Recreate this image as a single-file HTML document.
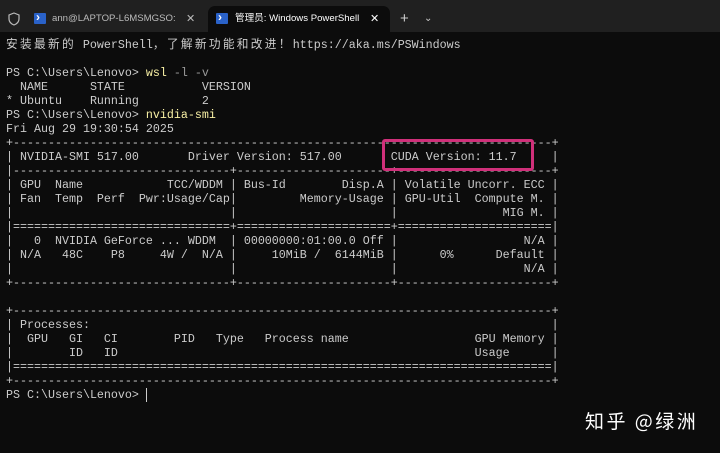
<!DOCTYPE html>
<html><head><meta charset="utf-8"><style>
body{margin:0;width:720px;height:453px;background:#0c0c0c;overflow:hidden;position:relative;font-family:"Liberation Sans","Noto Sans CJK SC",sans-serif}
.bar{position:absolute;left:0;top:0;width:720px;height:32px;background:#202020}
.tab{position:absolute;top:6px;height:26px;font-size:9.6px;color:#bbb;line-height:26px;white-space:nowrap}
.act{background:#0c0c0c;border-radius:7px 7px 0 0;color:#fff}
.ic{position:absolute;top:7px;width:12px;height:11px;background:#2a62c9;border-radius:1px}
.ic:after{content:"›";position:absolute;left:2px;top:-9px;color:#fff;font-size:12px;font-weight:bold}
pre{position:absolute;left:6px;top:38px;margin:0;font-family:"Liberation Mono","Noto Sans CJK SC",monospace;font-size:11.67px;line-height:14px;color:#cccccc}
.cj{letter-spacing:2.33px}
.y{color:#f9f1a5}.g{color:#9a9a9a}
.box{position:absolute;left:382px;top:139px;width:146px;height:26px;border:3px solid #d0307a;border-radius:3px}
.wm{position:absolute;left:585px;top:407px;color:#fff;font-size:19px;font-family:"Noto Sans CJK SC",sans-serif;letter-spacing:2.5px}
</style></head><body>
<div class="bar">
<svg style="position:absolute;left:8px;top:12px" width="12" height="14" viewBox="0 0 12 14"><path d="M6 1 L11 3 V7 C11 10 8.5 12 6 13 C3.5 12 1 10 1 7 V3 Z" fill="none" stroke="#bbb" stroke-width="1.2"/></svg>
<div class="tab" style="left:28px;width:174px"><div class="ic" style="left:6px"></div><span style="position:absolute;left:24px;width:124px;overflow:hidden">ann@LAPTOP-L6MSMGSO: ~/c</span><span style="position:absolute;left:158px;font-size:11px">✕</span></div>
<div class="tab act" style="left:208px;width:182px"><div class="ic" style="left:8px"></div><span style="position:absolute;left:27px">管理员: Windows PowerShell</span><span style="position:absolute;left:162px;font-size:11px">✕</span></div>
<div class="tab" style="left:400px;color:#ccc;font-size:15px">+</div>
<div class="tab" style="left:424px;color:#ccc;font-size:10px">⌄</div>
</div>
<pre><span class="cj">安装最新的</span> PowerShell<span class="cj">，了解新功能和改进！</span>https://aka.ms/PSWindows

PS C:\Users\Lenovo&gt; <span class="y">wsl</span> <span class="g">-l -v</span>
  NAME      STATE           VERSION
* Ubuntu    Running         2
PS C:\Users\Lenovo&gt; <span class="y">nvidia-smi</span>
Fri Aug 29 19:30:54 2025
+-----------------------------------------------------------------------------+
| NVIDIA-SMI 517.00       Driver Version: 517.00       CUDA Version: 11.7     |
|-------------------------------+----------------------+----------------------+
| GPU  Name            TCC/WDDM | Bus-Id        Disp.A | Volatile Uncorr. ECC |
| Fan  Temp  Perf  Pwr:Usage/Cap|         Memory-Usage | GPU-Util  Compute M. |
|                               |                      |               MIG M. |
|===============================+======================+======================|
|   0  NVIDIA GeForce ... WDDM  | 00000000:01:00.0 Off |                  N/A |
| N/A   48C    P8     4W /  N/A |     10MiB /  6144MiB |      0%      Default |
|                               |                      |                  N/A |
+-------------------------------+----------------------+----------------------+

+-----------------------------------------------------------------------------+
| Processes:                                                                  |
|  GPU   GI   CI        PID   Type   Process name                  GPU Memory |
|        ID   ID                                                   Usage      |
|=============================================================================|
+-----------------------------------------------------------------------------+
PS C:\Users\Lenovo&gt; <span style="border-left:1px solid #ccc"></span></pre>
<div class="box"></div>
<div class="wm">知乎 @绿洲</div>
</body></html>
